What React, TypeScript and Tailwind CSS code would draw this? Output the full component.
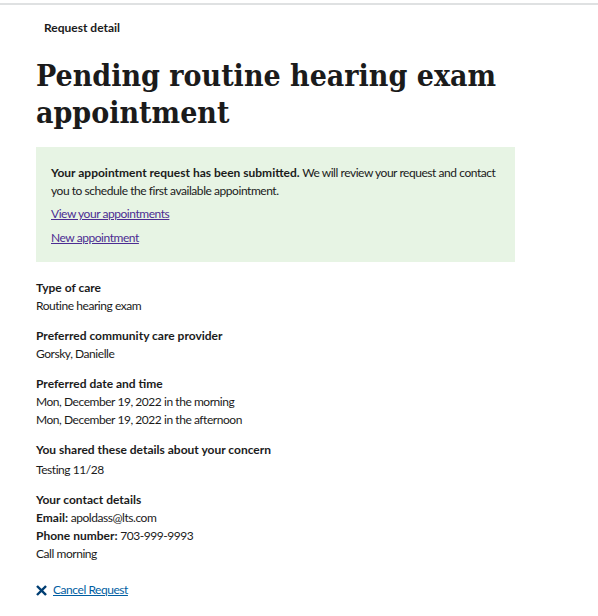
export default function App() {
  const body = { fontFamily: "Lato, 'Noto Sans', sans-serif" };
  return (
    <div className="min-h-screen bg-white text-[#1b1b1b]" style={body}>
      <div className="border-t-2 border-[#dfe1e2] mt-[3px]" />
      <div className="pl-9 pr-20">
        <p className="ml-2 mt-[14px] text-[12px] font-bold">Request detail</p>
        <h1
          className="mt-[20px] text-[30px] leading-[37px] font-bold"
          style={{ fontFamily: "'DejaVu Serif', serif", fontStretch: "condensed" }}
        >
          Pending routine hearing exam appointment
        </h1>
        <div className="mt-[16px] w-[479px] bg-[#e7f4e4] px-[15px] pt-[17px] pb-[15px] text-[12px] leading-[18px] tracking-[-0.45px]">
          <p>
            <span className="font-bold tracking-normal">Your appointment request has been submitted.</span> We will
            review your request and contact you to schedule the first available appointment.
          </p>
          <p className="mt-[5px]">
            <a href="#" className="text-[#4c2c92] underline">View your appointments</a>
          </p>
          <p className="mt-[6px]">
            <a href="#" className="text-[#4c2c92] underline">New appointment</a>
          </p>
        </div>
        <div className="mt-[17px] text-[12px] leading-[18px] tracking-[-0.45px]">
          <p className="font-bold tracking-normal">Type of care</p>
          <p>Routine hearing exam</p>
          <p className="font-bold tracking-normal mt-[12px]">Preferred community care provider</p>
          <p>Gorsky, Danielle</p>
          <p className="font-bold tracking-normal mt-[12px]">Preferred date and time</p>
          <p>Mon, December 19, 2022 in the morning</p>
          <p>Mon, December 19, 2022 in the afternoon</p>
          <p className="font-bold tracking-normal mt-[12px]">You shared these details about your concern</p>
          <p className="mt-[2px]">Testing 11/28</p>
          <p className="font-bold tracking-normal mt-[12px]">Your contact details</p>
          <p><span className="font-bold tracking-normal">Email:</span> apoldass@lts.com</p>
          <p><span className="font-bold tracking-normal">Phone number:</span> 703-999-9993</p>
          <p>Call morning</p>
          <div className="mt-[18px] flex items-center gap-[6px]">
            <svg width="11" height="11" viewBox="0 0 12 12">
              <path d="M2 2 L10 10 M10 2 L2 10" stroke="#003e73" strokeWidth="2.6" strokeLinecap="square" />
            </svg>
            <a href="#" className="text-[#005ea2] underline">Cancel Request</a>
          </div>
        </div>
      </div>
    </div>
  );
}
